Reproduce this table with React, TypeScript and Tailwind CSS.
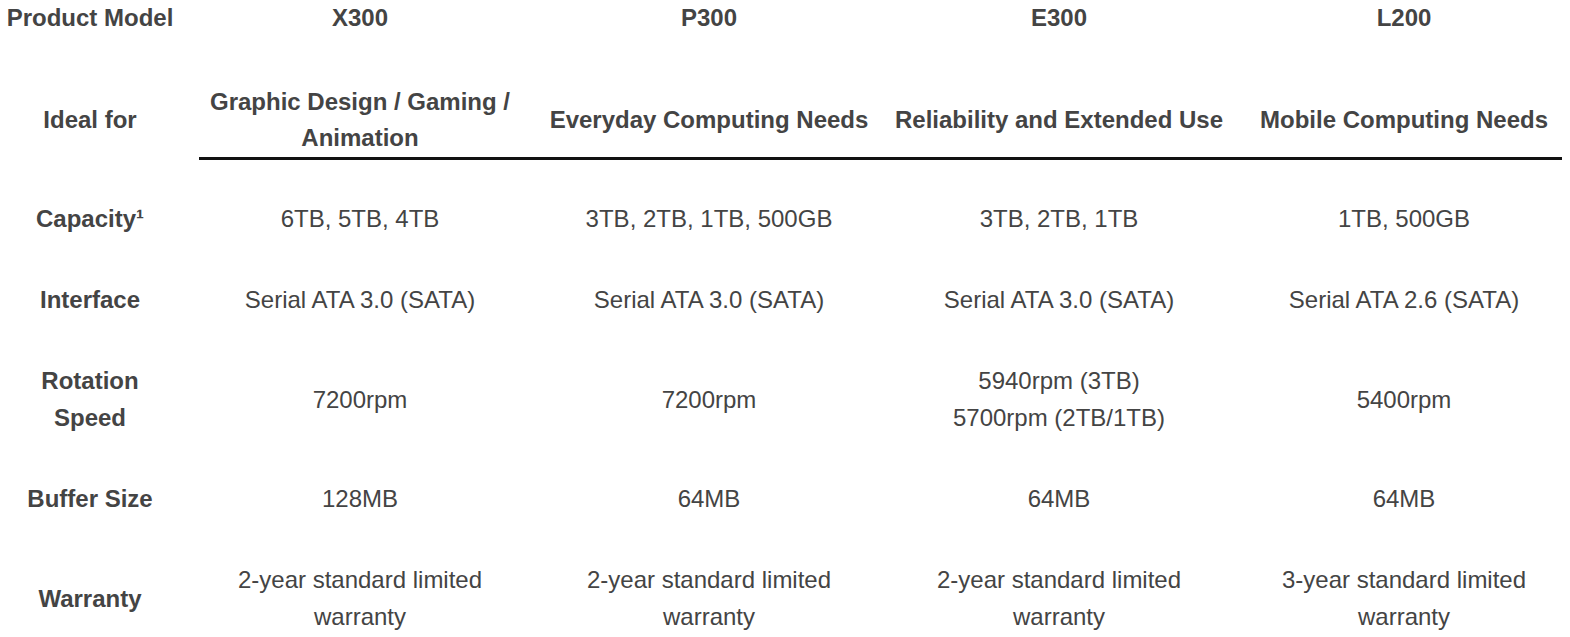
import React from "react";

interface SpecRow {
  label: React.ReactNode;
  values: React.ReactNode[];
}

const models = ["X300", "P300", "E300", "L200"];

const idealFor: React.ReactNode[] = [
  <>
    Graphic Design / Gaming /
    <br />
    Animation
  </>,
  "Everyday Computing Needs",
  "Reliability and Extended Use",
  "Mobile Computing Needs",
];

const rows: SpecRow[] = [
  { label: "Capacity¹", values: ["6TB, 5TB, 4TB", "3TB, 2TB, 1TB, 500GB", "3TB, 2TB, 1TB", "1TB, 500GB"] },
  {
    label: "Interface",
    values: ["Serial ATA 3.0 (SATA)", "Serial ATA 3.0 (SATA)", "Serial ATA 3.0 (SATA)", "Serial ATA 2.6 (SATA)"],
  },
  {
    label: (
      <>
        Rotation
        <br />
        Speed
      </>
    ),
    values: [
      "7200rpm",
      "7200rpm",
      <>
        5940rpm (3TB)
        <br />
        5700rpm (2TB/1TB)
      </>,
      "5400rpm",
    ],
  },
  { label: "Buffer Size", values: ["128MB", "64MB", "64MB", "64MB"] },
  {
    label: "Warranty",
    values: [1, 2, 3, 4].map((n) => (
      <>
        {n === 4 ? "3" : "2"}-year standard limited
        <br />
        warranty
      </>
    )),
  },
];

const gridCols = "grid grid-cols-[180px_360px_338px_362px_328px] items-center text-center";

function Cell({ children, bold }: { children: React.ReactNode; bold?: boolean }) {
  return (
    <div className={`flex justify-center whitespace-nowrap ${bold ? "font-bold" : ""}`}>
      <div>{children}</div>
    </div>
  );
}

export default function App() {
  return (
    <div
      className="w-[1570px] h-[637px] overflow-hidden bg-white text-[24px] leading-[36px] text-[#444]"
      style={{ fontFamily: '"Liberation Sans", Arial, sans-serif' }}
    >
      <div className={gridCols}>
        <Cell bold>Product Model</Cell>
        {models.map((m) => (
          <Cell key={m} bold>
            {m}
          </Cell>
        ))}
      </div>

      <div className={`${gridCols} mt-[48px]`}>
        <Cell bold>Ideal for</Cell>
        {idealFor.map((v, i) => (
          <Cell key={i} bold>
            {v}
          </Cell>
        ))}
      </div>

      <div className="ml-[199px] w-[1363px] h-[3px] mt-[1px] bg-[#111]" />

      <div className="mt-[18px] leading-[37px]">
        {rows.map((row, i) => (
          <div key={i} className={`${gridCols} py-[22px]`}>
            <Cell bold>{row.label}</Cell>
            {row.values.map((v, j) => (
              <Cell key={j}>{v}</Cell>
            ))}
          </div>
        ))}
      </div>
    </div>
  );
}
